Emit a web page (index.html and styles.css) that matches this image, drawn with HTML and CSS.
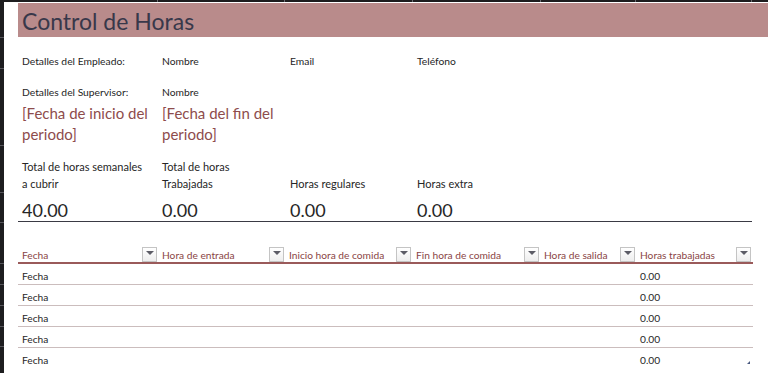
FILE: index.html
```html
<!DOCTYPE html>
<html lang="es">
<head>
<meta charset="utf-8">
<title>Control de Horas</title>
<link rel="stylesheet" href="styles.css">
</head>
<body>
<div class="frame">
  <div class="topbar">
    <span class="tb-cell tb-first"></span>
    <span class="tb-cell"></span>
    <span class="tb-cell"></span>
    <span class="tb-cell"></span>
    <span class="tb-cell"></span>
    <span class="tb-cell"></span>
    <span class="tb-cell tb-rest"></span>
  </div>
  <div class="body">
    <div class="gutter"></div>
    <div class="sheet">
      <h1 class="title">Control de Horas</h1>

      <div class="grid4 row-emp">
        <span>Detalles del Empleado:</span>
        <span>Nombre</span>
        <span>Email</span>
        <span>Teléfono</span>
      </div>

      <div class="grid4 row-sup">
        <span>Detalles del Supervisor:</span>
        <span>Nombre</span>
      </div>

      <div class="grid4 row-dates">
        <span>[Fecha de inicio del periodo]</span>
        <span>[Fecha del fin del periodo]</span>
      </div>

      <div class="grid4 row-labels">
        <span>Total de horas semanales<br>a cubrir</span>
        <span>Total de horas<br>Trabajadas</span>
        <span class="bottom">Horas regulares</span>
        <span class="bottom">Horas extra</span>
      </div>

      <div class="grid4 row-values">
        <span>40.00</span>
        <span>0.00</span>
        <span>0.00</span>
        <span>0.00</span>
      </div>

      <div class="table">
        <div class="thead">
          <div class="th"><span>Fecha</span><span class="dd"></span></div>
          <div class="th"><span>Hora de entrada</span><span class="dd"></span></div>
          <div class="th"><span>Inicio hora de comida</span><span class="dd"></span></div>
          <div class="th"><span>Fin hora de comida</span><span class="dd"></span></div>
          <div class="th"><span>Hora de salida</span><span class="dd"></span></div>
          <div class="th th-last"><span>Horas trabajadas</span><span class="dd"></span></div>
        </div>
        <div class="tr"><span>Fecha</span><span></span><span></span><span></span><span></span><span>0.00</span></div>
        <div class="tr"><span>Fecha</span><span></span><span></span><span></span><span></span><span>0.00</span></div>
        <div class="tr"><span>Fecha</span><span></span><span></span><span></span><span></span><span>0.00</span></div>
        <div class="tr"><span>Fecha</span><span></span><span></span><span></span><span></span><span>0.00</span></div>
        <div class="tr tr-last"><span>Fecha</span><span></span><span></span><span></span><span></span><span>0.00</span></div>
        <span class="resize"></span>
      </div>
    </div>
  </div>
</div>
</body>
</html>
```

FILE: styles.css
```css
* { box-sizing: border-box; }

html, body {
  margin: 0;
  padding: 0;
  background: #ffffff;
}

body {
  font-family: Lato, "Open Sans", sans-serif;
  color: #262626;
  width: 768px;
  height: 373px;
  overflow: hidden;
}

.frame {
  display: flex;
  flex-direction: column;
  height: 373px;
}

.topbar {
  display: grid;
  grid-template-columns: 158px 127px 128px 128px 95px 116px 1fr;
  height: 2px;
  background: #1d1d1f;
}

.tb-cell {
  border-right: 1px solid #6a6a70;
}

.tb-rest { border-right: none; }

.body {
  display: flex;
  flex: 1;
}

.gutter {
  width: 4px;
  flex: none;
  background:
    linear-gradient(to bottom,
      #1d1d1f 0, #1d1d1f 35px, #55555a 35px, #55555a 36px,
      #1d1d1f 36px, #1d1d1f 66px, #55555a 66px, #55555a 67px,
      #1d1d1f 67px, #1d1d1f 143px, #55555a 143px, #55555a 144px,
      #1d1d1f 144px, #1d1d1f 190px, #55555a 190px, #55555a 191px,
      #1d1d1f 191px, #1d1d1f 220px, #55555a 220px, #55555a 221px,
      #1d1d1f 221px, #1d1d1f 261px, #55555a 261px, #55555a 262px,
      #1d1d1f 262px, #1d1d1f 282px, #55555a 282px, #55555a 283px,
      #1d1d1f 283px, #1d1d1f 303px, #55555a 303px, #55555a 304px,
      #1d1d1f 304px, #1d1d1f 324px, #55555a 324px, #55555a 325px,
      #1d1d1f 325px, #1d1d1f 344px, #55555a 344px, #55555a 345px,
      #1d1d1f 345px);
}

.sheet {
  flex: 1;
  padding-left: 14px;
  display: flex;
  flex-direction: column;
}

.title {
  margin: 1px 0 0 0;
  height: 34px;
  background: #b98b8b;
  color: #38384a;
  font-family: Lato, sans-serif;
  font-weight: 400;
  font-size: 23px;
  line-height: 37px;
  padding-left: 4px;
}

.grid4 {
  display: grid;
  grid-template-columns: 140px 128px 127px 128px;
}

.grid4 > span {
  padding-left: 4px;
}

.row-emp {
  margin-top: 16px;
  font-size: 10.3px;
  line-height: 16px;
}

.row-sup {
  margin-top: 15px;
  font-size: 10.3px;
  line-height: 16px;
}

.row-dates {
  margin-top: 3px;
  font-size: 15px;
  line-height: 21px;
  color: #8e4c4c;
}

.row-dates > span {
  padding-right: 4px;
}

.row-labels {
  margin-top: 13px;
  font-size: 11px;
  line-height: 17px;
}

.row-labels > span.bottom {
  align-self: end;
}

.row-values {
  margin-top: 7px;
  height: 23px;
  font-size: 18px;
  line-height: 22px;
  border-bottom: 1px solid #3a3a44;
  width: 734px;
}

.table {
  position: relative;
  margin-top: 20px;
  width: 735px;
}

.thead,
.tr {
  display: grid;
  grid-template-columns: 140px 127px 127px 128px 96px 117px;
}

.thead {
  height: 22px;
  border-bottom: 2px solid #9a5a5a;
  color: #8a4545;
  font-size: 10.2px;
}

.th {
  display: flex;
  justify-content: space-between;
  align-items: flex-end;
  padding-left: 4px;
  padding-right: 1px;
  padding-bottom: 0;
}

.th > span:first-child {
  line-height: 13px;
}

.th-last { padding-right: 2px; }

.dd {
  position: relative;
  width: 15px;
  height: 15px;
  margin-bottom: 0;
  border: 1px solid #c4c4c4;
  background: linear-gradient(#ffffff, #eeeeee);
}

.dd::after {
  content: "";
  position: absolute;
  left: 3px;
  top: 3px;
  border-left: 4px solid transparent;
  border-right: 4px solid transparent;
  border-top: 4px solid #5c5c66;
}

.tr {
  height: 21px;
  border-bottom: 1px solid #cbbdbd;
  font-size: 10.2px;
  line-height: 15px;
  padding-top: 5px;
}

.tr > span {
  padding-left: 4px;
}

.tr-last {
  border-bottom: none;
}

.resize {
  position: absolute;
  right: 3px;
  bottom: 5px;
  width: 0;
  height: 0;
  border-left: 3px solid transparent;
  border-bottom: 3px solid #4a5a80;
}
```
